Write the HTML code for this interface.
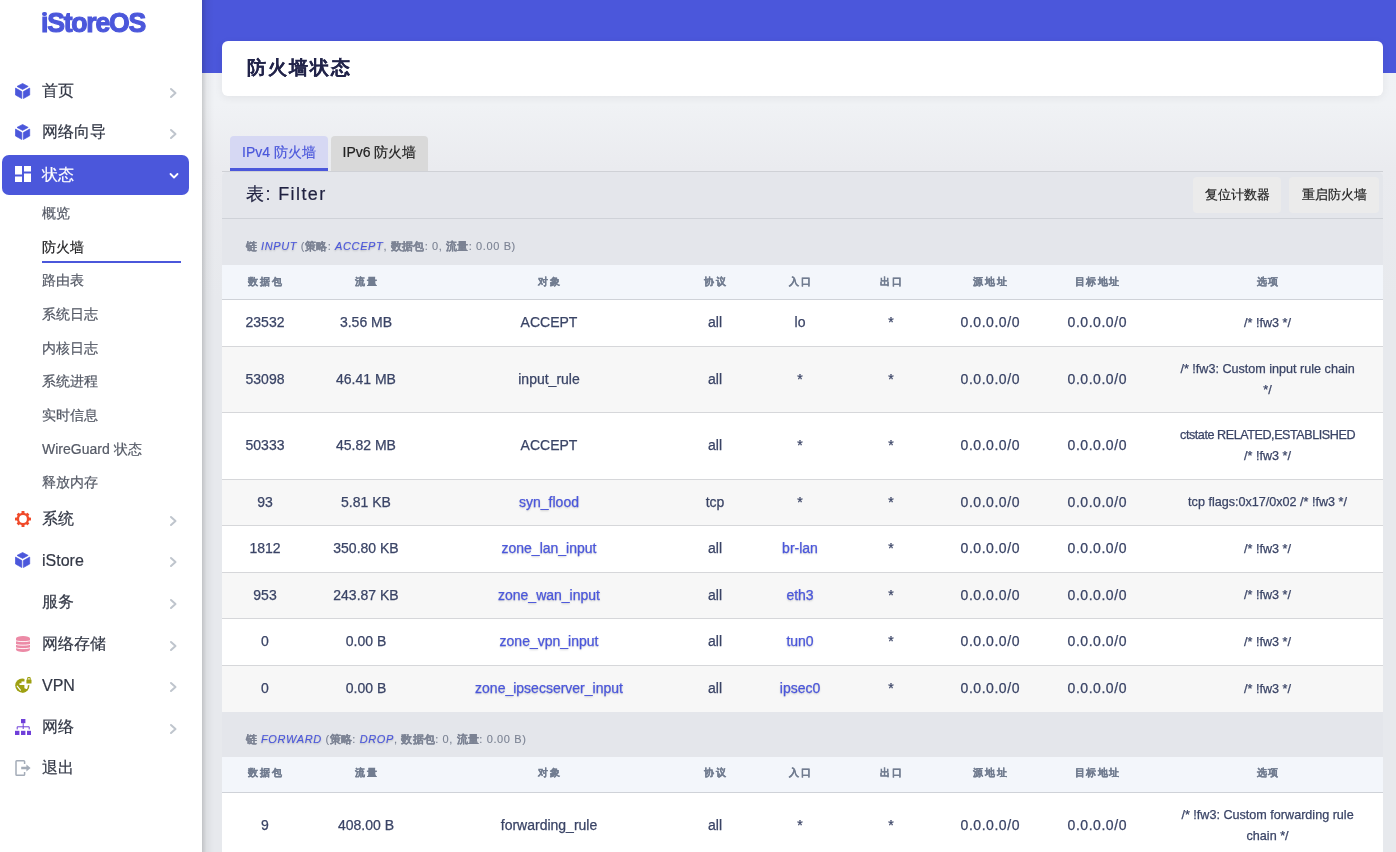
<!DOCTYPE html>
<html><head><meta charset="utf-8">
<style>
*{box-sizing:border-box;margin:0;padding:0}
html,body{width:1396px;height:852px;overflow:hidden;background:linear-gradient(to bottom,#eff1f5 0,#f0f2f5 105px,#eaebef 168px,#e7e9ed 300px,#e7e9ed 852px);font-family:"Liberation Sans",sans-serif;}
#side{position:absolute;left:0;top:0;width:202px;height:852px;background:#fff;z-index:2}
#shadow{position:absolute;left:202px;top:0;width:12px;height:852px;background:linear-gradient(to right,rgba(0,0,0,.16),rgba(0,0,0,.04) 40%,rgba(0,0,0,0));z-index:3}
#band{position:absolute;left:202px;top:0;width:1194px;height:73px;background:#4b57db}
#titlecard{position:absolute;left:222px;top:41px;width:1161px;height:55px;background:#fff;border-radius:6px;box-shadow:0 2px 8px rgba(0,0,0,.06)}
#titlecard h2{position:absolute;left:25px;top:14px;font-size:19px;font-weight:bold;color:#22244a;letter-spacing:2px;-webkit-text-stroke:0.1px #22244a}
.logo{position:absolute;left:41px;top:7px;font-size:28px;line-height:32px;font-weight:bold;color:#4b57db;letter-spacing:-1.3px;-webkit-text-stroke:1.1px #4b57db;transform:scaleX(0.95);transform-origin:0 0}
.mi{position:absolute;left:0;width:202px;height:40px;font-size:16px;color:#333846}
.mi .t{position:absolute;left:42px;top:10px}
.mi .ic{position:absolute;left:15px;top:12px;width:16px;height:16px}
.mi .ch{position:absolute;left:166px;top:14px;width:12px;height:14px}
#act{position:absolute;left:2px;top:155px;width:187px;height:40px;background:#4b57db;border-radius:7px;color:#fff;font-size:16px}
#act .t{position:absolute;left:40px;top:9.5px}
#act .ic{position:absolute;left:13px;top:11px;width:16px;height:16px}
#act .ch{position:absolute}
#uline{position:absolute;left:42px;top:261px;width:139px;height:2px;background:#4b57db}
.si.cur{color:#1d1d1f}
.si{position:absolute;left:42px;font-size:14px;color:#555a66}

#tabs{position:absolute;left:230px;top:136px;height:35px}
.tab{position:absolute;top:0;height:35px;font-size:14px;border-radius:4px 4px 0 0;text-align:center;line-height:33px}
.tab1{left:0;width:98px;background:#d6d8f3;color:#4b57db;border-bottom:3px solid #4b57db}
.tab2{left:101px;width:97px;background:#d9d9d9;color:#222}
#tline{position:absolute;left:222px;top:171px;width:1161px;height:1px;background:#cfd1d6}
#panel{position:absolute;left:222px;top:172px;width:1161px;height:700px;background:#e4e6eb;border-radius:5px 5px 0 0}
#phead{position:absolute;left:0;top:0;width:1161px;height:47px;border-bottom:1px solid #cfd2d8}
#phead h3{position:absolute;left:24px;top:10px;font-size:18px;font-weight:normal;color:#1f2140;letter-spacing:1.4px}
.btn{position:absolute;top:5px;height:36px;background:#ebebeb;border-radius:4px;font-size:13px;color:#222;text-align:center;line-height:36px}
table{position:absolute;left:0;border-collapse:collapse;table-layout:fixed;width:1161px}
td,th{text-align:center;vertical-align:middle;padding:0}
th{font-size:10px;font-weight:bold;color:#717c90;background:#f3f6fb;height:34px;border-bottom:1px solid #cfd2d8;letter-spacing:1.6px;padding-left:1.6px}
tr.h2 th{padding-bottom:2px}
td{-webkit-text-stroke:0.25px;font-size:14px;color:#3a4466;border-bottom:1px solid #d6d7da;line-height:20px;padding-bottom:1px}
tr.w td{background:#fff}
tr.g td{background:#f7f7f7}
td.chain{background:#e4e6eb;height:46px;text-align:left;padding-left:24px;padding-top:9px;font-size:11px;font-weight:normal;color:#7b8293;border-bottom:none;letter-spacing:0.62px}
td.chain b{letter-spacing:0.3px}
.op{font-size:12.6px;line-height:19px}
a{color:#4b57db;text-decoration:none;text-shadow:0 1px 2px rgba(0,0,0,.22)}
td.chain a{font-style:italic}
.mi,.si,.tab,.btn,#phead h3,#act{-webkit-text-stroke:0.2px}
th{-webkit-text-stroke:0.25px}
td.chain{-webkit-text-stroke:0.1px}
.ip{letter-spacing:0.55px;margin-right:-0.55px}
tr.last td{border-bottom:none}
</style></head><body><div style="position:absolute;left:0;top:0;width:1396px;height:852px;will-change:transform">
<div id="side">
  <div class="logo">ıStoreOS</div><div style="position:absolute;left:42px;top:11.5px;width:4.8px;height:4.8px;border-radius:50%;background:#4b57db"></div>
<div class="mi" style="top:71px"><svg class="ic" viewBox="0 0 16 16"><g fill="#4b57db" stroke="#4b57db" stroke-width="0.7" stroke-linejoin="round"><path d="M7.6 0.5 L13.2 3.4 L7.6 6.4 L2 3.4 Z"/><path d="M0.5 5.1 L6.8 8.6 L6.8 15.5 L0.5 12 Z"/><path d="M8.4 8.6 L14.7 5.1 L14.7 12 L8.4 15.5 Z"/></g></svg><span class="t">首页</span><svg class="ch" viewBox="0 0 12 14"><path d="M5 4 L9.5 8 L5 12" stroke="#bfc5cd" stroke-width="2" fill="none" stroke-linecap="round" stroke-linejoin="round"/></svg></div>
<div class="mi" style="top:112px"><svg class="ic" viewBox="0 0 16 16"><g fill="#4b57db" stroke="#4b57db" stroke-width="0.7" stroke-linejoin="round"><path d="M7.6 0.5 L13.2 3.4 L7.6 6.4 L2 3.4 Z"/><path d="M0.5 5.1 L6.8 8.6 L6.8 15.5 L0.5 12 Z"/><path d="M8.4 8.6 L14.7 5.1 L14.7 12 L8.4 15.5 Z"/></g></svg><span class="t">网络向导</span><svg class="ch" viewBox="0 0 12 14"><path d="M5 4 L9.5 8 L5 12" stroke="#bfc5cd" stroke-width="2" fill="none" stroke-linecap="round" stroke-linejoin="round"/></svg></div>
<div class="mi" style="top:499px"><svg class="ic" viewBox="0 0 16 16"><g fill="#f04a2a"><circle cx="8" cy="8" r="6.2"/><rect x="6.5" y="0" width="3" height="16" rx="0.6"/><rect x="0" y="6.5" width="16" height="3" rx="0.6"/><rect x="6.5" y="0.3" width="3" height="15.4" rx="0.6" transform="rotate(45 8 8)"/><rect x="6.5" y="0.3" width="3" height="15.4" rx="0.6" transform="rotate(-45 8 8)"/></g><circle cx="8" cy="8" r="3.9" fill="#fff"/></svg><span class="t">系统</span><svg class="ch" viewBox="0 0 12 14"><path d="M5 4 L9.5 8 L5 12" stroke="#bfc5cd" stroke-width="2" fill="none" stroke-linecap="round" stroke-linejoin="round"/></svg></div>
<div class="mi" style="top:540px"><svg class="ic" viewBox="0 0 16 16"><g fill="#4b57db" stroke="#4b57db" stroke-width="0.7" stroke-linejoin="round"><path d="M7.6 0.5 L13.2 3.4 L7.6 6.4 L2 3.4 Z"/><path d="M0.5 5.1 L6.8 8.6 L6.8 15.5 L0.5 12 Z"/><path d="M8.4 8.6 L14.7 5.1 L14.7 12 L8.4 15.5 Z"/></g></svg><span class="t" style="top:12px">iStore</span><svg class="ch" viewBox="0 0 12 14"><path d="M5 4 L9.5 8 L5 12" stroke="#bfc5cd" stroke-width="2" fill="none" stroke-linecap="round" stroke-linejoin="round"/></svg></div>
<div class="mi" style="top:582px"><span class="t">服务</span><svg class="ch" viewBox="0 0 12 14"><path d="M5 4 L9.5 8 L5 12" stroke="#bfc5cd" stroke-width="2" fill="none" stroke-linecap="round" stroke-linejoin="round"/></svg></div>
<div class="mi" style="top:624px"><svg class="ic" viewBox="0 0 14 16" style="left:16px;width:14px;height:16px"><g fill="#ec8aa6"><rect x="0" y="2.5" width="14" height="11"/><ellipse cx="7" cy="2.5" rx="7" ry="2.5"/><ellipse cx="7" cy="13.5" rx="7" ry="2.5"/></g><g stroke="#fff" stroke-width="0.9" fill="none"><path d="M-0.5 4.3 A7.5 1.3 0 0 0 14.5 4.3"/><path d="M-0.5 7.9 A7.5 1.3 0 0 0 14.5 7.9"/><path d="M-0.5 11.3 A7.5 1.3 0 0 0 14.5 11.3"/></g></svg><span class="t">网络存储</span><svg class="ch" viewBox="0 0 12 14"><path d="M5 4 L9.5 8 L5 12" stroke="#bfc5cd" stroke-width="2" fill="none" stroke-linecap="round" stroke-linejoin="round"/></svg></div>
<div class="mi" style="top:665px"><svg class="ic" viewBox="0 0 17 17" style="left:14.5px;top:12px;width:17px;height:17px"><defs><clipPath id="gc"><circle cx="7.3" cy="8.6" r="7.1"/></clipPath></defs><g fill="#9ea012"><path clip-path="url(#gc)" d="M9.5 0 V4.4 H6.5 V6.3 H4.5 V8.1 H9.4 V11.2 L12.5 12.5 L14 17 H0 V0Z"/><path d="M13.63 8.1 A6.35 6.35 0 0 1 7.3 14.95" stroke="#9ea012" stroke-width="1.5" fill="none"/><rect x="11.4" y="2.5" width="5.1" height="4.1" rx="0.5"/><path d="M12.65 2.8 V1.7 A1.3 1.3 0 0 1 15.25 1.7 V2.8" stroke="#9ea012" stroke-width="1.1" fill="none"/></g><path d="M2.2 9.2 L5.4 13.2" stroke="#fff" stroke-width="1.1" stroke-linecap="round"/></svg><span class="t" style="top:12px">VPN</span><svg class="ch" viewBox="0 0 12 14"><path d="M5 4 L9.5 8 L5 12" stroke="#bfc5cd" stroke-width="2" fill="none" stroke-linecap="round" stroke-linejoin="round"/></svg></div>
<div class="mi" style="top:707px"><svg class="ic" viewBox="0 0 16 16"><g fill="#6f3fd9"><rect x="6" y="0" width="4.4" height="4.2"/><rect x="0" y="11.8" width="4.4" height="4.2"/><rect x="6" y="11.8" width="4.4" height="4.2"/><rect x="12" y="11.8" width="4.4" height="4.2"/></g><path d="M8.2 4.2 V10 M2.2 10.4 V7.8 H14.2 V10.4" stroke="#6f3fd9" stroke-width="1" fill="none"/></svg><span class="t">网络</span><svg class="ch" viewBox="0 0 12 14"><path d="M5 4 L9.5 8 L5 12" stroke="#bfc5cd" stroke-width="2" fill="none" stroke-linecap="round" stroke-linejoin="round"/></svg></div>
<div class="mi" style="top:748px"><svg class="ic" viewBox="0 0 16 16"><path d="M9.6 4 V1.6 Q9.6 0.8 8.8 0.8 H1.8 Q1 0.8 1 1.6 V14.4 Q1 15.2 1.8 15.2 H8.8 Q9.6 15.2 9.6 14.4 V12" stroke="#a4acb8" stroke-width="1.5" fill="none"/><path d="M6.2 6.8 H11.4 V4.6 L15.6 8 L11.4 11.4 V9.2 H6.2Z" fill="#a4acb8"/></svg><span class="t">退出</span></div>
<div id="act"><svg class="ic" viewBox="0 0 16 16"><g fill="#fff"><rect x="0" y="0" width="7" height="8.5"/><rect x="0" y="10.5" width="7" height="5.5"/><rect x="9" y="0" width="7" height="5.5"/><rect x="9" y="7.5" width="7" height="8.5"/></g></svg><span class="t">状态</span><svg class="ch" viewBox="0 0 10 8" style="width:10px;height:8px;left:167px;top:17px"><path d="M1.5 2 L5 5.5 L8.5 2" stroke="#fff" stroke-width="1.8" fill="none" stroke-linecap="round" stroke-linejoin="round"/></svg></div>
<div class="si" style="top:204.5px">概览</div>
<div class="si cur" style="top:238.5px">防火墙</div>
<div class="si" style="top:271.5px">路由表</div>
<div class="si" style="top:305.5px">系统日志</div>
<div class="si" style="top:339.5px">内核日志</div>
<div class="si" style="top:372.5px">系统进程</div>
<div class="si" style="top:406.5px">实时信息</div>
<div class="si" style="top:440.5px">WireGuard 状态</div>
<div class="si" style="top:473.5px">释放内存</div>
<div id="uline"></div>
</div>
<div id="shadow"></div>
<div id="band"></div>
<div id="titlecard"><h2>防火墙状态</h2></div>
<div id="tabs"><div class="tab tab1">IPv4 防火墙</div><div class="tab tab2">IPv6 防火墙</div></div>
<div id="tline"></div><div id="panel"><div id="phead"><h3>表: Filter</h3><div class="btn" style="left:971px;width:88px">复位计数器</div><div class="btn" style="left:1067px;width:90px">重启防火墙</div></div>
<table style="top:47px"><colgroup><col style="width:86px"><col style="width:116px"><col style="width:250px"><col style="width:82px"><col style="width:88px"><col style="width:94px"><col style="width:104px"><col style="width:110px"><col style="width:231px"></colgroup><tr><td class="chain" colspan="9"><b>链</b> <a>INPUT</a> (<b>策略</b>: <a>ACCEPT</a>, <b>数据包</b>: 0, <b>流量</b>: 0.00 B)</td></tr><tr><th>数据包</th><th>流量</th><th>对象</th><th>协议</th><th>入口</th><th>出口</th><th>源地址</th><th>目标地址</th><th>选项</th></tr><tr class="w" style="height:47px"><td>23532</td><td>3.56 MB</td><td>ACCEPT</td><td>all</td><td>lo</td><td>*</td><td><span class="ip">0.0.0.0/0</span></td><td><span class="ip">0.0.0.0/0</span></td><td><span class="op">/* !fw3 */</span></td></tr>
<tr class="g" style="height:66px"><td>53098</td><td>46.41 MB</td><td>input_rule</td><td>all</td><td>*</td><td>*</td><td><span class="ip">0.0.0.0/0</span></td><td><span class="ip">0.0.0.0/0</span></td><td><span class="op">/* !fw3: Custom input rule chain<br>*/</span></td></tr>
<tr class="w" style="height:67px"><td>50333</td><td>45.82 MB</td><td>ACCEPT</td><td>all</td><td>*</td><td>*</td><td><span class="ip">0.0.0.0/0</span></td><td><span class="ip">0.0.0.0/0</span></td><td><span class="op"><span style="letter-spacing:-0.45px">ctstate RELATED,ESTABLISHED</span><br>/* !fw3 */</span></td></tr>
<tr class="g" style="height:46px"><td>93</td><td>5.81 KB</td><td><a>syn_flood</a></td><td>tcp</td><td>*</td><td>*</td><td><span class="ip">0.0.0.0/0</span></td><td><span class="ip">0.0.0.0/0</span></td><td><span class="op">tcp flags:0x17/0x02 /* !fw3 */</span></td></tr>
<tr class="w" style="height:47px"><td>1812</td><td>350.80 KB</td><td><a>zone_lan_input</a></td><td>all</td><td><a>br-lan</a></td><td>*</td><td><span class="ip">0.0.0.0/0</span></td><td><span class="ip">0.0.0.0/0</span></td><td><span class="op">/* !fw3 */</span></td></tr>
<tr class="g" style="height:46px"><td>953</td><td>243.87 KB</td><td><a>zone_wan_input</a></td><td>all</td><td><a>eth3</a></td><td>*</td><td><span class="ip">0.0.0.0/0</span></td><td><span class="ip">0.0.0.0/0</span></td><td><span class="op">/* !fw3 */</span></td></tr>
<tr class="w" style="height:47px"><td>0</td><td>0.00 B</td><td><a>zone_vpn_input</a></td><td>all</td><td><a>tun0</a></td><td>*</td><td><span class="ip">0.0.0.0/0</span></td><td><span class="ip">0.0.0.0/0</span></td><td><span class="op">/* !fw3 */</span></td></tr>
<tr class="g last" style="height:47px"><td>0</td><td>0.00 B</td><td><a>zone_ipsecserver_input</a></td><td>all</td><td><a>ipsec0</a></td><td>*</td><td><span class="ip">0.0.0.0/0</span></td><td><span class="ip">0.0.0.0/0</span></td><td><span class="op">/* !fw3 */</span></td></tr>
<tr><td class="chain" colspan="9" style="height:45px"><b>链</b> <a>FORWARD</a> (<b>策略</b>: <a>DROP</a>, <b>数据包</b>: 0, <b>流量</b>: 0.00 B)</td></tr><tr class="h2" style="height:35px"><th>数据包</th><th>流量</th><th>对象</th><th>协议</th><th>入口</th><th>出口</th><th>源地址</th><th>目标地址</th><th>选项</th></tr><tr class="w" style="height:66px"><td>9</td><td>408.00 B</td><td>forwarding_rule</td><td>all</td><td>*</td><td>*</td><td><span class="ip">0.0.0.0/0</span></td><td><span class="ip">0.0.0.0/0</span></td><td><span class="op">/* !fw3: Custom forwarding rule<br>chain */</span></td></tr>
</table></div>
</div></body></html>
